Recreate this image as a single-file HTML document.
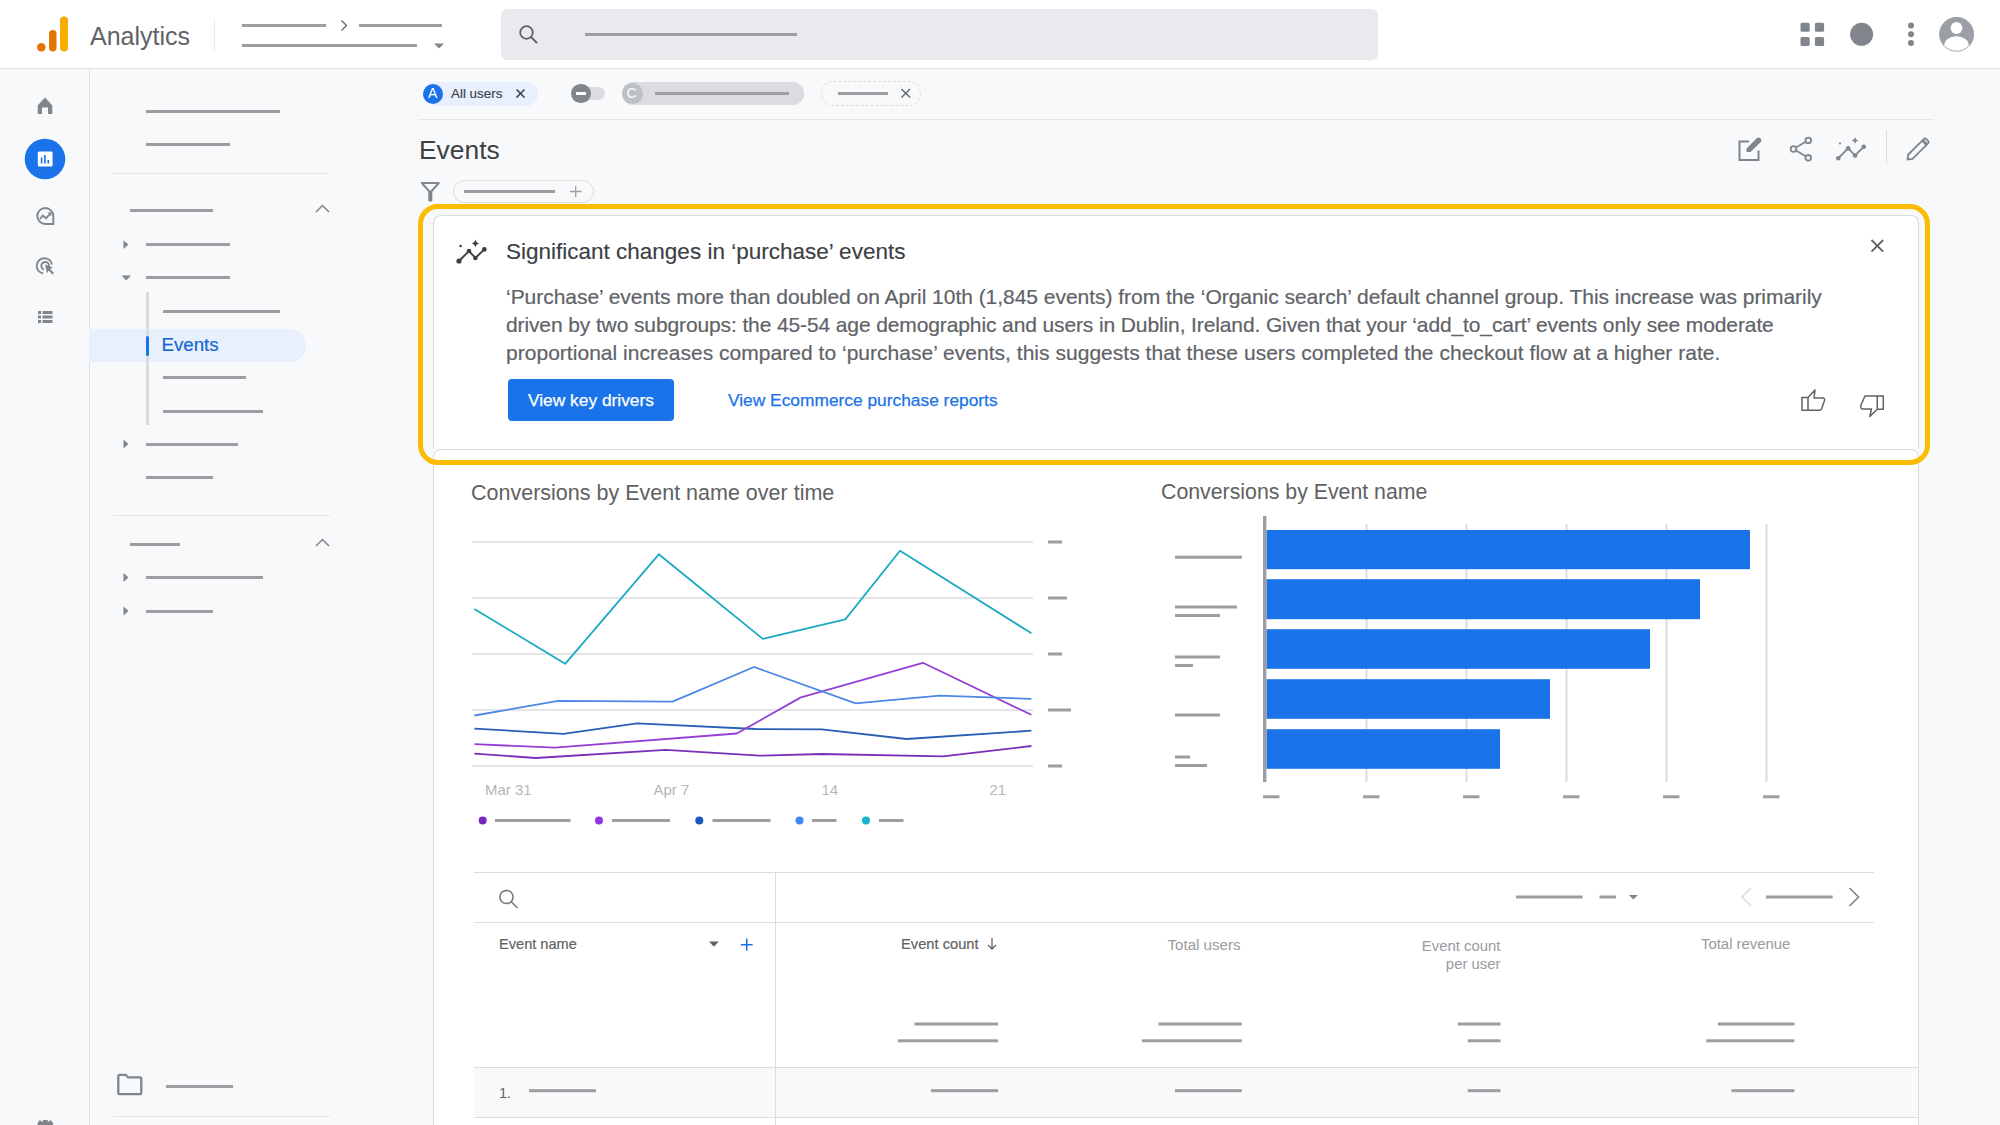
<!DOCTYPE html>
<html><head><meta charset="utf-8">
<style>
*{margin:0;padding:0;box-sizing:border-box}
html,body{width:2000px;height:1125px;overflow:hidden;background:#f8f9fa;font-family:"Liberation Sans",sans-serif}
.a{position:absolute}
.ln{position:absolute;background:#9d9ea1;height:3px}
.hd{position:absolute;left:0;top:0;width:2000px;height:69px;background:#fff;border-bottom:1px solid #e0e2e5}
.t{position:absolute;white-space:nowrap;line-height:1}
svg{position:absolute;overflow:visible}
</style></head><body>

<!-- HEADER -->
<div class="hd"></div>
<div class="a" style="left:501px;top:9px;width:877px;height:50.6px;border-radius:6px;background:#e8eaed"></div>
<svg style="left:0;top:0" width="2000" height="69">
  <circle cx="41.3" cy="47.3" r="4.3" fill="#e37400"/>
  <rect x="49" y="30" width="7.5" height="21.5" rx="3.75" fill="#e37400"/>
  <rect x="60" y="16.5" width="8" height="35" rx="4" fill="#f9ab00"/>
  <line x1="214.5" y1="18" x2="214.5" y2="51" stroke="#e8eaed" stroke-width="1"/>
  <path d="M341.5 20.5 L346.5 25.5 L341.5 30.5" fill="none" stroke="#5f6368" stroke-width="1.3"/>
  <path d="M434 43.5 L444 43.5 L439 48.5 Z" fill="#80868b"/>
  <!-- search -->
  <circle cx="526.5" cy="32.5" r="6.3" fill="none" stroke="#5f6368" stroke-width="1.8"/>
  <line x1="531" y1="37" x2="537" y2="43" stroke="#5f6368" stroke-width="1.8"/>
  <!-- right icons -->
  <rect x="1800.5" y="22.8" width="9.2" height="9" rx="1.5" fill="#80868b"/>
  <rect x="1814.9" y="22.8" width="9.2" height="9" rx="1.5" fill="#80868b"/>
  <rect x="1800.5" y="37" width="9.2" height="9" rx="1.5" fill="#80868b"/>
  <rect x="1814.9" y="37" width="9.2" height="9" rx="1.5" fill="#80868b"/>
  <circle cx="1861.6" cy="34.3" r="11.5" fill="#80868b"/>
  <circle cx="1911" cy="25.5" r="3" fill="#80868b"/>
  <circle cx="1911" cy="34.2" r="3" fill="#80868b"/>
  <circle cx="1911" cy="43" r="3" fill="#80868b"/>
  <defs><clipPath id="av"><circle cx="1956.6" cy="34.3" r="17.2"/></clipPath></defs>
  <circle cx="1956.6" cy="34.3" r="17.2" fill="#9aa0a6"/>
  <g clip-path="url(#av)">
    <circle cx="1956.5" cy="28" r="5.9" fill="#fff"/>
    <ellipse cx="1956.5" cy="46" rx="12.5" ry="9.8" fill="#fff"/>
  </g>
  <circle cx="1956.6" cy="34.3" r="16.9" fill="none" stroke="#9aa0a6" stroke-width="0.8"/>
</svg>
<div class="t" style="left:90px;top:23.5px;font-size:25px;color:#5f6368">Analytics</div>
<div class="ln" style="left:242px;top:24px;width:84px"></div>
<div class="ln" style="left:359px;top:24px;width:83px"></div>
<div class="ln" style="left:242px;top:44px;width:175px"></div>
<div class="ln" style="left:585px;top:33px;width:212px"></div>


<!-- LEFT RAIL + NAV -->
<div class="a" style="left:89px;top:69px;width:1px;height:1056px;background:#e0e2e5"></div>
<svg style="left:0;top:69px" width="90" height="1056">
  <!-- home -->
  <path d="M37.7 36.5 L45 28.6 L52.3 36.5 L52.3 45 L48 45 L48 38.5 L42 38.5 L42 45 L37.7 45 Z" fill="#80868b"/>
  <!-- reports active -->
  <circle cx="45" cy="90" r="20.3" fill="#1a73e8"/>
  <rect x="37.8" y="82.5" width="14.8" height="15" rx="1.5" fill="#fff"/>
  <rect x="40.8" y="88.5" width="1.6" height="6" fill="#1a73e8"/>
  <rect x="44.1" y="86" width="1.6" height="8.5" fill="#1a73e8"/>
  <rect x="47.5" y="91" width="1.6" height="3.5" fill="#1a73e8"/>
  <!-- explore -->
  <path d="M53.3 147 A8 8 0 1 0 45.3 155 L53.3 155 Z" fill="none" stroke="#80868b" stroke-width="1.9" stroke-linejoin="miter"/>
  <path d="M39.8 150.3 L42.8 146.5 L46 149.2 L50.2 144.8" fill="none" stroke="#80868b" stroke-width="1.8"/>
  <path d="M47.5 143.5 L51.5 143.3 L51.3 147.3 Z" fill="#80868b"/>
  <!-- advertising -->
  <path d="M52 195.5 A7.7 7.7 0 1 0 43.2 204.5" fill="none" stroke="#80868b" stroke-width="1.9"/>
  <path d="M48.8 198.3 A3.9 3.9 0 1 0 43.8 200.5" fill="none" stroke="#80868b" stroke-width="1.9"/>
  <path d="M45 195.5 L53 198.5 L50 200 L54 204 L52.5 205.5 L48.5 201.5 L47 204.5 Z" fill="#80868b"/>
  <!-- list -->
  <rect x="38" y="242" width="3" height="3" fill="#80868b"/>
  <rect x="42.5" y="242" width="10" height="3" fill="#80868b"/>
  <rect x="38" y="246.5" width="3" height="3" fill="#80868b"/>
  <rect x="42.5" y="246.5" width="10" height="3" fill="#80868b"/>
  <rect x="38" y="251" width="3" height="3" fill="#80868b"/>
  <rect x="42.5" y="251" width="10" height="3" fill="#80868b"/>
  <!-- gear (cut off) -->
  <circle cx="45.3" cy="1062.5" r="9" fill="#80868b"/>
  <rect x="42.8" y="1051" width="5" height="6" fill="#80868b"/>
  <rect x="34.5" y="1055.5" width="21.6" height="5" rx="1" fill="#80868b" transform="rotate(30 45.3 1062.5)"/>
  <rect x="34.5" y="1055.5" width="21.6" height="5" rx="1" fill="#80868b" transform="rotate(-30 45.3 1062.5)"/>
</svg>
<div class="ln" style="left:146px;top:109.5px;width:134px"></div>
<div class="ln" style="left:146px;top:143px;width:84px"></div>
<div class="a" style="left:113px;top:173px;width:217px;height:1px;background:#e3e5e8"></div>
<div class="ln" style="left:130px;top:209px;width:83px"></div>
<div class="ln" style="left:146px;top:243px;width:84px"></div>
<div class="ln" style="left:146px;top:276px;width:84px"></div>
<div class="ln" style="left:163px;top:310px;width:117px"></div>
<div class="a" style="left:89px;top:328.5px;width:217px;height:33.5px;border-radius:0 17px 17px 0;background:#e8f0fe"></div>
<div class="a" style="left:145.5px;top:292px;width:3px;height:133px;background:#dadce0"></div>
<div class="a" style="left:145.5px;top:335.5px;width:3px;height:20px;border-radius:2px;background:#1a73e8"></div>
<div class="t" style="left:161.5px;top:336.3px;font-size:18.7px;color:#1967d2;-webkit-text-stroke:0.2px #1967d2">Events</div>
<div class="ln" style="left:163px;top:376px;width:83px"></div>
<div class="ln" style="left:163px;top:410px;width:100px"></div>
<div class="ln" style="left:146px;top:443px;width:92px"></div>
<div class="ln" style="left:146px;top:476px;width:67px"></div>
<div class="a" style="left:113px;top:515px;width:217px;height:1px;background:#e3e5e8"></div>
<div class="ln" style="left:130px;top:543px;width:50px"></div>
<div class="ln" style="left:146px;top:576px;width:117px"></div>
<div class="ln" style="left:146px;top:610px;width:67px"></div>
<div class="ln" style="left:166px;top:1085px;width:67px"></div>
<div class="a" style="left:113px;top:1116px;width:217px;height:1px;background:#e3e5e8"></div>
<svg style="left:90px;top:69px" width="340" height="1056">
  <path d="M226 143 L232.5 136.5 L239 143" fill="none" stroke="#80868b" stroke-width="1.5"/>
  <path d="M226 477 L232.5 470.5 L239 477" fill="none" stroke="#80868b" stroke-width="1.5"/>
  <path d="M33.5 171.5 L38.5 175.5 L33.5 180 Z" fill="#80868b"/>
  <path d="M31.5 206.5 L41 206.5 L36.2 211.5 Z" fill="#80868b"/>
  <path d="M33.5 370.5 L38.5 375 L33.5 379.5 Z" fill="#80868b"/>
  <path d="M33.5 504 L38.5 508.5 L33.5 513 Z" fill="#80868b"/>
  <path d="M33.5 537.5 L38.5 542 L33.5 546.5 Z" fill="#80868b"/>
  <!-- folder -->
  <path d="M28.3 1007.5 Q28.3 1005.8 30 1005.8 L35.5 1005.8 L38 1008.3 L49.7 1008.3 Q51.3 1008.3 51.3 1010 L51.3 1023.5 Q51.3 1025.2 49.7 1025.2 L30 1025.2 Q28.3 1025.2 28.3 1023.5 Z" fill="none" stroke="#80868b" stroke-width="2.3" stroke-linejoin="round"/>
</svg>


<!-- MAIN: chips -->
<div class="a" style="left:418px;top:119px;width:1516px;height:1px;background:#e3e5e8"></div>
<div class="a" style="left:423px;top:82px;width:115px;height:23.5px;border-radius:12px;background:#e8f0fe"></div>
<div class="a" style="left:423px;top:83.6px;width:20px;height:20px;border-radius:50%;background:#1a73e8"></div>
<div class="t" style="left:428px;top:86px;font-size:14px;color:#fff">A</div>
<div class="t" style="left:451px;top:86.7px;font-size:13.4px;color:#3c4043;-webkit-text-stroke:0.15px #3c4043">All users</div>
<div class="a" style="left:604px-0px;top:87px;width:0;height:0"></div>
<div class="a" style="left:575px;top:87px;width:30px;height:13px;border-radius:7px;background:#dadce0"></div>
<div class="a" style="left:571px;top:83.8px;width:19.6px;height:19.6px;border-radius:50%;background:#80868b"></div>
<div class="a" style="left:575.5px;top:92.2px;width:10.5px;height:3px;background:#fff"></div>
<div class="a" style="left:621.5px;top:82px;width:182.5px;height:23px;border-radius:12px;background:#dadce0"></div>
<div class="a" style="left:622px;top:82.5px;width:21px;height:21px;border-radius:50%;background:#bdc1c6"></div>
<div class="t" style="left:626.5px;top:86px;font-size:14px;color:#fff">C</div>
<div class="ln" style="left:654.5px;top:91.5px;width:134px"></div>
<div class="a" style="left:821px;top:81px;width:100px;height:25px;border-radius:13px;border:1px dashed #dadce0"></div>
<div class="ln" style="left:838px;top:91.5px;width:50px"></div>
<svg style="left:0;top:0" width="2000" height="215">
  <path d="M516.5 89.5 L524.5 97.5 M524.5 89.5 L516.5 97.5" stroke="#3c4043" stroke-width="1.6"/>
  <path d="M901.5 89 L910 97.5 M910 89 L901.5 97.5" stroke="#5f6368" stroke-width="1.4"/>
  <!-- filter -->
  <path d="M421.8 183 L438.8 183 L430.3 192.5 Z" fill="none" stroke="#80868b" stroke-width="1.9" stroke-linejoin="round"/><rect x="428.3" y="191" width="4" height="10.5" rx="1" fill="#80868b"/>
  <path d="M570 191.5 L581.5 191.5 M575.7 186 L575.7 197" stroke="#9aa0a6" stroke-width="1.3"/>
  <!-- toolbar -->
  <path d="M1749 141.5 L1739.5 141.5 L1739.5 160 L1758.5 160 L1758.5 150.5" fill="none" stroke="#80868b" stroke-width="2"/>
  <path d="M1746.5 152 L1746.5 148.5 L1757 138 Q1758.5 136.8 1760 138 L1761 139 Q1762 140.5 1761 141.8 L1750.5 152 Z" fill="#80868b"/>
  <circle cx="1808.3" cy="140.4" r="2.8" fill="none" stroke="#80868b" stroke-width="1.8"/>
  <circle cx="1793.5" cy="149" r="2.8" fill="none" stroke="#80868b" stroke-width="1.8"/>
  <circle cx="1808.3" cy="157.8" r="2.8" fill="none" stroke="#80868b" stroke-width="1.8"/>
  <path d="M1796 147.5 L1805.8 141.8 M1796 150.5 L1805.8 156.3" stroke="#80868b" stroke-width="1.8"/>
  <path d="M1838.3 158.2 L1848.2 148.3 L1855.1 155.5 L1863.8 146.7" fill="none" stroke="#80868b" stroke-width="1.8"/>
  <circle cx="1838.3" cy="158.2" r="2.3" fill="#80868b"/>
  <circle cx="1848.2" cy="148.3" r="2.3" fill="#80868b"/>
  <circle cx="1855.1" cy="155.5" r="2.3" fill="#80868b"/>
  <circle cx="1863.8" cy="146.7" r="2.3" fill="#80868b"/>
  <path d="M1855.1 137 Q1855.6 140 1858.5 140.4 Q1855.6 140.9 1855.1 143.8 Q1854.6 140.9 1851.7 140.4 Q1854.6 140 1855.1 137 Z" fill="#80868b"/>
  <circle cx="1840" cy="143.4" r="1.1" fill="#80868b"/>
  <line x1="1886.5" y1="130" x2="1886.5" y2="163.5" stroke="#dadce0" stroke-width="1"/>
  <path d="M1907.5 159.5 L1908.3 154.5 L1923.5 139.3 Q1925 137.8 1926.5 139.3 L1927.8 140.6 Q1929.3 142.1 1927.8 143.6 L1912.5 158.8 Z" fill="none" stroke="#80868b" stroke-width="1.8" stroke-linejoin="round"/>
  <path d="M1922.5 140.3 L1926.8 144.6" stroke="#80868b" stroke-width="3"/>
</svg>
<div class="t" style="left:419px;top:137px;font-size:26.4px;color:#3c4043">Events</div>
<div class="a" style="left:452.5px;top:179.5px;width:141px;height:23.5px;border-radius:12px;border:1px solid #dadce0"></div>
<div class="ln" style="left:463.5px;top:190px;width:91.5px"></div>


<!-- REPORT CARD -->
<!-- INSIGHT CARD -->
<div class="a" style="left:433px;top:215px;width:1486px;height:234px;border:1px solid #dadce0;border-bottom:none;border-radius:8px 8px 0 0;background:#fff"></div>
<div class="a" style="left:433px;top:449px;width:1486px;height:700px;border:1px solid #dadce0;border-radius:8px;background:#fff"></div>
<div class="a" style="left:418px;top:203.5px;width:1512px;height:261px;border:5px solid #fbbc04;border-radius:20px"></div>
<svg style="left:0;top:0" width="2000" height="470">
  <path d="M459 261 L469 251 L475.4 258 L484.3 249.4" fill="none" stroke="#3c4043" stroke-width="1.9"/>
  <circle cx="459" cy="261" r="2.6" fill="#3c4043"/>
  <circle cx="469" cy="251" r="2.3" fill="#3c4043"/>
  <circle cx="475.4" cy="258" r="2.3" fill="#3c4043"/>
  <circle cx="484.3" cy="249.4" r="2.4" fill="#3c4043"/>
  <path d="M475.4 239.5 Q476 242.8 479.3 243.4 Q476 244 475.4 247.3 Q474.8 244 471.5 243.4 Q474.8 242.8 475.4 239.5 Z" fill="#3c4043"/>
  <circle cx="460.6" cy="246" r="1.3" fill="#3c4043"/>
  <path d="M1871.5 240 L1883.2 251.7 M1883.2 240 L1871.5 251.7" stroke="#5f6368" stroke-width="1.8"/>
  <!-- thumbs up -->
  <path d="M1802 397.5 H1808 V410.3 H1802 Z M1808 397.5 L1815 390 L1814 397.9 L1823.5 397.9 Q1825 398.5 1824.5 400.5 L1821.5 409 Q1821 410.3 1819.5 410.3 L1808 410.3" fill="none" stroke="#616161" stroke-width="1.5" stroke-linejoin="round"/>
  <!-- thumbs down -->
  <path d="M1877.3 396 H1883.3 V409.2 H1877.3 Z M1877.3 396 L1865 396 L1861 405 Q1860 408.8 1862.5 409 L1871.5 409 L1869.8 416.5 L1877.3 409.3" fill="none" stroke="#616161" stroke-width="1.5" stroke-linejoin="round"/>
</svg>
<div class="t" style="left:506px;top:241px;font-size:22.5px;color:#3c4043;-webkit-text-stroke:0.15px #3c4043">Significant changes in ‘purchase’ events</div>
<div class="a" style="left:506px;top:283px;font-size:21px;line-height:28.2px;color:#5f6368;white-space:nowrap;-webkit-text-stroke:0.2px #5f6368">
<div style="letter-spacing:-0.034px">‘Purchase’ events more than doubled on April 10th (1,845 events) from the ‘Organic search’ default channel group. This increase was primarily</div>
<div style="letter-spacing:-0.116px">driven by two subgroups: the 45-54 age demographic and users in Dublin, Ireland. Given that your ‘add_to_cart’ events only see moderate</div>
<div style="letter-spacing:0.027px">proportional increases compared to ‘purchase’ events, this suggests that these users completed the checkout flow at a higher rate.</div>
</div>
<div class="a" style="left:507.5px;top:379px;width:166.5px;height:41.5px;border-radius:4px;background:#1a73e8"></div>
<div class="t" style="left:528px;top:391.5px;font-size:17.35px;color:#fff;-webkit-text-stroke:0.25px #fff">View key drivers</div>
<div class="t" style="left:728px;top:391.5px;font-size:17.35px;color:#1a73e8;-webkit-text-stroke:0.25px #1a73e8">View Ecommerce purchase reports</div>


<!-- CHARTS -->
<div class="t" style="left:471px;top:483px;font-size:21.5px;color:#616161">Conversions by Event name over time</div>
<div class="t" style="left:1161px;top:482px;font-size:21.3px;color:#616161">Conversions by Event name</div>
<svg style="left:0;top:0" width="2000" height="1125">
  <g stroke="#e3e5e8" stroke-width="2">
    <line x1="472" y1="542" x2="1033" y2="542"/>
    <line x1="472" y1="598" x2="1033" y2="598"/>
    <line x1="472" y1="654" x2="1033" y2="654"/>
    <line x1="472" y1="710" x2="1033" y2="710"/>
    <line x1="472" y1="766" x2="1033" y2="766"/>
  </g>
  <g fill="#9d9ea1">
    <rect x="1048" y="540.5" width="14" height="3"/>
    <rect x="1048" y="596.5" width="19" height="3"/>
    <rect x="1048" y="652.5" width="14" height="3"/>
    <rect x="1048" y="708.5" width="23" height="3"/>
    <rect x="1048" y="764.5" width="14" height="3"/>
  </g>
  <g fill="none" stroke-width="1.8" stroke-linejoin="round">
    <polyline stroke="#7b2fb8" points="474.4,753.6 535.7,758 665.7,749.8 759.3,755.7 821.7,754 943,756.4 1031.4,746"/>
    <polyline stroke="#2a5fb5" points="474.4,728.6 563.4,733.8 637,723.4 755.8,729 821.7,729.3 906.6,739 1031.4,730.7"/>
    <polyline stroke="#9540d5" points="474.4,744.2 554.8,747.7 736.8,733.5 800.9,697.4 922.9,662.8 1031.4,714.8"/>
    <polyline stroke="#4d88e8" points="474.4,715.5 558.2,700.9 672.6,701.6 754,667 855.6,703.3 939.5,695.7 1031.4,698.8"/>
    <polyline stroke="#1baac2" points="474.4,609 565.2,663.8 658.8,554.3 762.8,638.9 845.3,619.4 900,550.8 1031.4,633.3"/>
  </g>
  <g>
    <circle cx="482.7" cy="820.5" r="4" fill="#7627bb"/><rect x="495" y="819" width="75.5" height="3" fill="#9d9ea1"/>
    <circle cx="599" cy="820.5" r="4" fill="#9334e6"/><rect x="612" y="819" width="58" height="3" fill="#9d9ea1"/>
    <circle cx="699.3" cy="820.5" r="4" fill="#185abc"/><rect x="712.5" y="819" width="58" height="3" fill="#9d9ea1"/>
    <circle cx="799.5" cy="820.5" r="4" fill="#4285f4"/><rect x="812" y="819" width="24.5" height="3" fill="#9d9ea1"/>
    <circle cx="866" cy="820.5" r="4" fill="#12b5cb"/><rect x="879" y="819" width="24.5" height="3" fill="#9d9ea1"/>
  </g>
  <!-- bar chart -->
  <g stroke="#dadce0" stroke-width="2">
    <line x1="1366.5" y1="524" x2="1366.5" y2="782"/>
    <line x1="1466.5" y1="524" x2="1466.5" y2="782"/>
    <line x1="1566.5" y1="524" x2="1566.5" y2="782"/>
    <line x1="1666.5" y1="524" x2="1666.5" y2="782"/>
    <line x1="1766.5" y1="524" x2="1766.5" y2="782"/>
  </g>
  <g fill="#1a73e8">
    <rect x="1266.4" y="530" width="483.6" height="39.2"/>
    <rect x="1266.4" y="579.2" width="433.6" height="40"/>
    <rect x="1266.4" y="629.2" width="383.6" height="39.6"/>
    <rect x="1266.4" y="679.2" width="283.6" height="39.6"/>
    <rect x="1266.4" y="729.2" width="233.6" height="39.6"/>
  </g>
  <rect x="1263" y="516" width="3.4" height="266" fill="#9d9ea1"/>
  <g fill="#9d9ea1">
    <rect x="1263" y="795.3" width="16.4" height="3"/>
    <rect x="1363" y="795.3" width="16.4" height="3"/>
    <rect x="1463" y="795.3" width="16.4" height="3"/>
    <rect x="1563" y="795.3" width="16.4" height="3"/>
    <rect x="1663" y="795.3" width="16.4" height="3"/>
    <rect x="1763" y="795.3" width="16.4" height="3"/>
    <rect x="1175" y="555.7" width="67" height="3"/>
    <rect x="1175" y="605.5" width="62" height="3"/>
    <rect x="1175" y="614" width="45" height="3"/>
    <rect x="1175" y="655.5" width="45" height="3"/>
    <rect x="1175" y="664" width="18" height="3"/>
    <rect x="1175" y="713.5" width="45" height="3"/>
    <rect x="1175" y="755.5" width="15" height="3"/>
    <rect x="1175" y="764" width="32" height="3"/>
  </g>
</svg>
<div class="t" style="left:485px;top:782px;font-size:15px;color:#b3b6b9">Mar 31</div>
<div class="t" style="left:653.5px;top:782px;font-size:15px;color:#b3b6b9">Apr 7</div>
<div class="t" style="left:821.5px;top:782px;font-size:15px;color:#b3b6b9">14</div>
<div class="t" style="left:989.5px;top:782px;font-size:15px;color:#b3b6b9">21</div>


<!-- TABLE -->
<div class="a" style="left:474px;top:1068px;width:1444px;height:49px;background:#f8f9fa"></div>
<div class="a" style="left:474px;top:872px;width:1400px;height:1px;background:#dadce0"></div>
<div class="a" style="left:474px;top:922px;width:1400px;height:1px;background:#dadce0"></div>
<div class="a" style="left:474px;top:1067px;width:1444px;height:1px;background:#dadce0"></div>
<div class="a" style="left:474px;top:1117px;width:1444px;height:1px;background:#dadce0"></div>
<div class="a" style="left:775px;top:872px;width:1px;height:253px;background:#dadce0"></div>
<svg style="left:0;top:0" width="2000" height="1125">
  <circle cx="506.5" cy="897" r="6.6" fill="none" stroke="#757575" stroke-width="1.5"/>
  <line x1="511.2" y1="901.7" x2="517.5" y2="908" stroke="#757575" stroke-width="1.5"/>
  <path d="M709 941.6 L718.8 941.6 L713.9 946.8 Z" fill="#5f6368"/>
  <path d="M740.8 944.7 L752.7 944.7 M746.7 938.6 L746.7 950.8" stroke="#1a73e8" stroke-width="1.5"/>
  <path d="M992 938 L992 949 M988 945 L992 949 L996 945" fill="none" stroke="#5f6368" stroke-width="1.3"/>
  <path d="M1628.8 895 L1637.8 895 L1633.3 899.5 Z" fill="#80868b"/>
  <path d="M1751 888 L1742 897 L1751 906" fill="none" stroke="#dadce0" stroke-width="1.6"/>
  <path d="M1849.5 888 L1858.5 897 L1849.5 906" fill="none" stroke="#80868b" stroke-width="1.7"/>
  <g fill="#9d9ea1">
    <rect x="1516" y="895.5" width="66.5" height="3"/>
    <rect x="1599.5" y="895.5" width="16.5" height="3"/>
    <rect x="1766" y="895.5" width="66.7" height="3"/>
    <rect x="914.4" y="1022.5" width="83.6" height="3"/>
    <rect x="897.8" y="1039.3" width="100.2" height="3"/>
    <rect x="1158.5" y="1022.5" width="83.3" height="3"/>
    <rect x="1141.9" y="1039.3" width="99.9" height="3"/>
    <rect x="1457.8" y="1022.5" width="42.7" height="3"/>
    <rect x="1467.7" y="1039.3" width="32.8" height="3"/>
    <rect x="1717.9" y="1022.5" width="76.5" height="3"/>
    <rect x="1706.2" y="1039.3" width="88.2" height="3"/>
    <rect x="529" y="1089.2" width="67" height="3"/>
    <rect x="931" y="1089.2" width="67" height="3"/>
    <rect x="1175" y="1089.2" width="66.8" height="3"/>
    <rect x="1467.7" y="1089.2" width="32.8" height="3"/>
    <rect x="1731.4" y="1089.2" width="63" height="3"/>
  </g>
</svg>
<div class="t" style="left:499px;top:936.8px;font-size:14.6px;color:#5f6368;-webkit-text-stroke:0.2px #5f6368">Event name</div>
<div class="t" style="left:901px;top:936.8px;font-size:14.7px;color:#5f6368;-webkit-text-stroke:0.2px #5f6368">Event count</div>
<div class="t" style="left:1167.5px;top:936.5px;font-size:15.1px;color:#999b9e">Total users</div>
<div class="t" style="left:1420px;top:936.5px;font-size:14.9px;color:#999b9e;text-align:right;line-height:18px;width:80.5px">Event count<br>per user</div>
<div class="t" style="left:1701px;top:936.5px;font-size:14.9px;color:#999b9e">Total revenue</div>
<div class="t" style="left:499px;top:1086px;font-size:14.6px;color:#5f6368">1.</div>

</body></html>
